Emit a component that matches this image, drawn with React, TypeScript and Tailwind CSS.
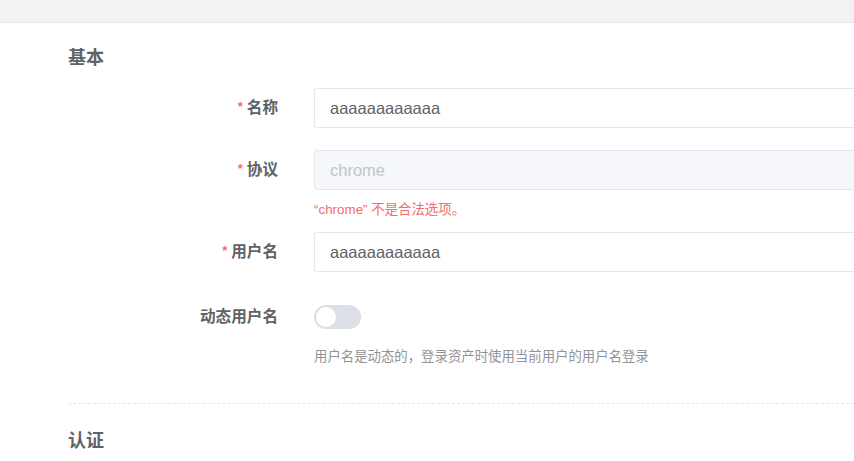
const font = {
  fontFamily: '"Liberation Sans", "Noto Sans CJK SC", sans-serif',
}

function Label({ text, required }: { text: string; required?: boolean }) {
  return (
    <div className="w-[246px] shrink-0 pr-[36px] flex justify-end items-center text-[15.6px] font-bold text-[#606266]">
      {required && <span className="text-[#f56c6c] text-[13px] mr-[4px] -mt-[3px]">*</span>}
      {text}
    </div>
  )
}

function Input({ value, disabled }: { value: string; disabled?: boolean }) {
  return (
    <div
      className={
        "flex-1 h-[40px] flex items-center px-[15px] pt-[1px] border border-[#e4e7ed] rounded-l-[3px] border-r-0 text-[16.5px] " +
        (disabled ? "bg-[#f5f7fa] text-[#c0c4cc]" : "bg-white text-[#606266]")
      }
    >
      {value}
    </div>
  )
}

export default function App() {
  return (
    <div className="w-[854px] h-[461px] overflow-hidden bg-white" style={font}>
      <div className="h-[23px] bg-[#f2f2f2] border-b border-[#e8e8e8]" />

      <div className="pl-[68px]">
        <h3 className="pt-[24px] text-[18px] font-bold text-[#606266] leading-[22px]">基本</h3>

        <div className="mt-[19px] flex items-center">
          <Label text="名称" required />
          <Input value="aaaaaaaaaaaa" />
        </div>

        <div className="mt-[22px] flex items-center">
          <Label text="协议" required />
          <Input value="chrome" disabled />
        </div>
        <div className="flex">
          <div className="w-[246px] shrink-0" />
          <div className="h-[42px] pt-[10px] text-[13.4px] leading-[20px] text-[#f56c6c]">“chrome” 不是合法选项。</div>
        </div>

        <div className="flex items-center">
          <Label text="用户名" required />
          <Input value="aaaaaaaaaaaa" />
        </div>

        <div className="mt-[25px] flex items-center h-[40px]">
          <Label text="动态用户名" />
          <div className="w-[47px] h-[24px] rounded-full bg-[#dcdfe6] p-[2px] flex items-center">
            <div className="w-[20px] h-[20px] rounded-full bg-white" />
          </div>
        </div>
        <div className="flex">
          <div className="w-[246px] shrink-0" />
          <div className="pt-[10px] text-[13.4px] leading-[20px] text-[#909399]">
            用户名是动态的，登录资产时使用当前用户的用户名登录
          </div>
        </div>

        <div className="mt-[36px] border-t border-dashed border-[#e4e7ed]" />

        <h3 className="pt-[26px] text-[18px] font-bold text-[#606266] leading-[22px]">认证</h3>
      </div>
    </div>
  )
}
